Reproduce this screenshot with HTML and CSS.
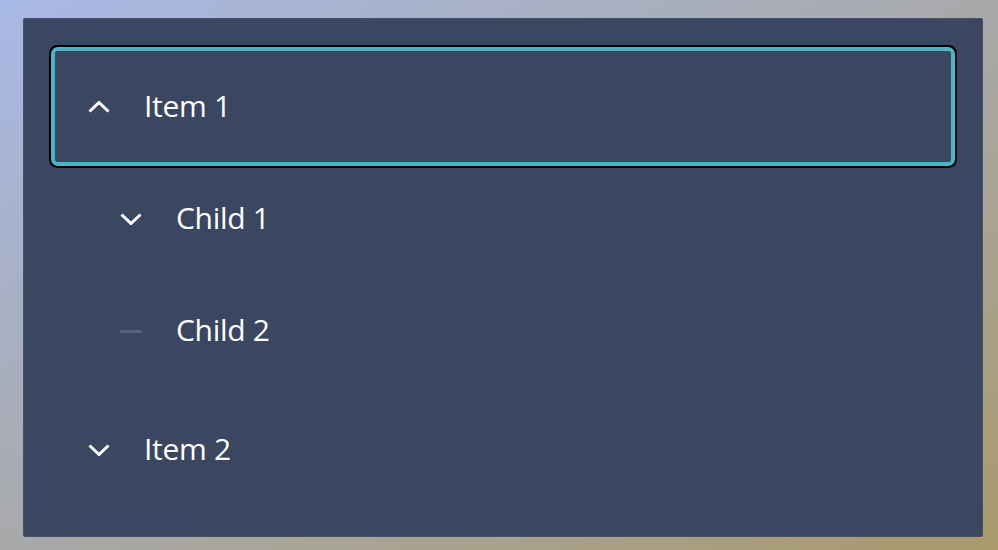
FILE: index.html
```html
<!DOCTYPE html>
<html>
<head>
<meta charset="utf-8">
<link rel="stylesheet" href="styles.css">
</head>
<body>
<div class="panel">
  <div class="tree">
    <div class="row focused">
      <span class="icon"><svg width="22" height="12" viewBox="0 0 22 12"><polyline points="1.5,10.5 11,1.5 20.5,10.5" fill="none" stroke="#fff" stroke-width="3"/></svg></span>
      <span class="label">Item 1</span>
    </div>
    <div class="children">
      <div class="row child">
        <span class="icon"><svg width="22" height="12" viewBox="0 0 22 12"><polyline points="1.5,1.5 11,10.5 20.5,1.5" fill="none" stroke="#fff" stroke-width="3"/></svg></span>
        <span class="label">Child 1</span>
      </div>
      <div class="row child">
        <span class="icon"><span class="dash"></span></span>
        <span class="label">Child 2</span>
      </div>
    </div>
    <div class="row">
      <span class="icon"><svg width="22" height="12" viewBox="0 0 22 12"><polyline points="1.5,1.5 11,10.5 20.5,1.5" fill="none" stroke="#fff" stroke-width="3"/></svg></span>
      <span class="label">Item 2</span>
    </div>
  </div>
</div>
</body>
</html>
```

FILE: styles.css
```css
html, body {
  margin: 0;
  height: 100%;
}
body {
  width: 998px;
  height: 550px;
  box-sizing: border-box;
  padding: 18px 15px 0 23px;
  background: linear-gradient(to bottom right, #a8b9e6 0%, #a8a9aa 50%, #a9996b 100%);
  font-family: "Open Sans", "Noto Sans", sans-serif;
  overflow: hidden;
}
.panel {
  width: 960px;
  height: 519px;
  box-sizing: border-box;
  background: #3b4661;
  border-radius: 3px;
  box-shadow: inset 0 0 0 1px #44506c;
  padding: 33px 32px 0 32px;
}
.tree {
  display: flex;
  flex-direction: column;
}
.row {
  height: 112px;
  display: flex;
  align-items: center;
  padding-left: 33px;
  border-radius: 3px;
  color: #fff;
}
.row.child {
  padding-left: 65px;
}
.focused {
  height: 111px;
  margin-bottom: 1px;
  box-shadow: 0 0 0 4px #46b7c5, 0 0 0 6px #000;
  border-radius: 3px;
}
.children {
  padding-bottom: 7px;
}
.icon {
  width: 22px;
  height: 22px;
  display: flex;
  align-items: center;
  justify-content: center;
  margin-right: 34px;
}
.icon svg {
  display: block;
}
.dash {
  display: block;
  width: 22px;
  height: 3px;
  border-radius: 2px;
  background: #56617c;
}
.label {
  font-size: 30px;
  line-height: 1;
  letter-spacing: -0.3px;
  position: relative;
  top: -1px;
}
```
